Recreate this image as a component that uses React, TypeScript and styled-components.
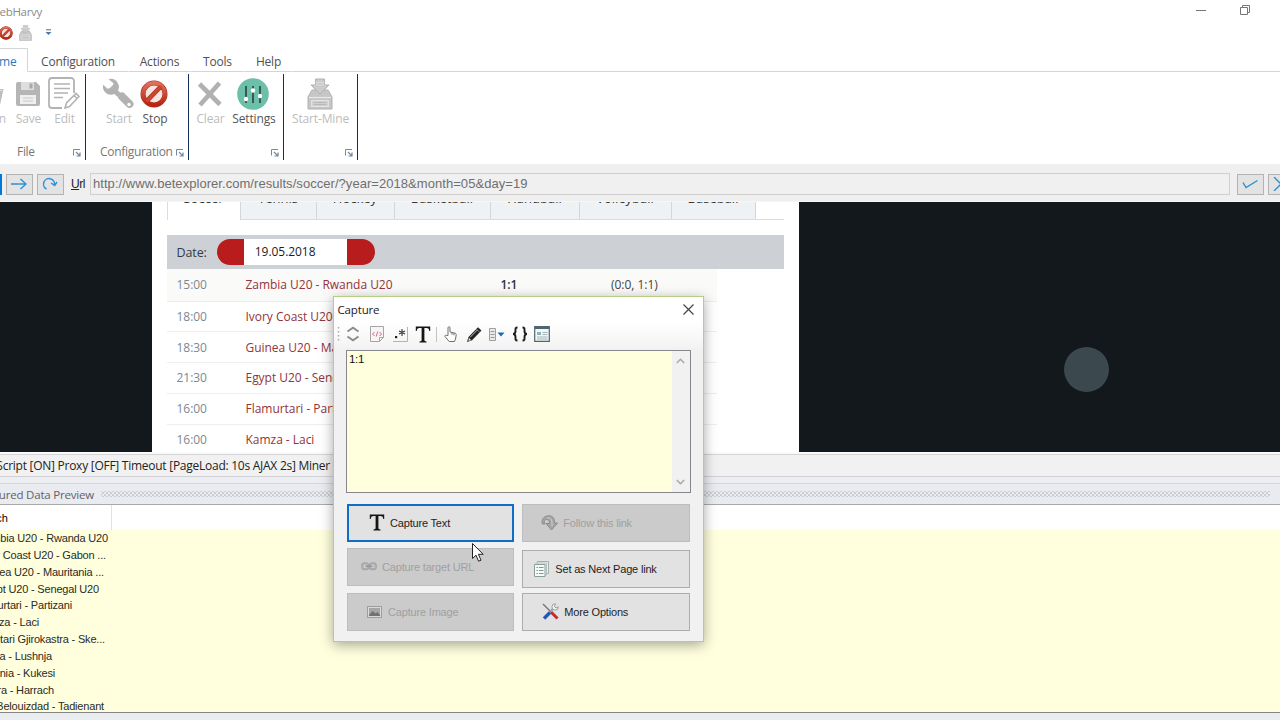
import React from "react";
import styled, { createGlobalStyle } from "styled-components";

const UI = `"Open Sans", "Noto Sans", sans-serif`;
const SANS = `"Liberation Sans", Arial, sans-serif`;

const Global = createGlobalStyle`
  * { box-sizing: border-box; }
  body { margin: 0; background: #fff; font-family: ${UI}; font-size: 12px; }
  svg { display: block; flex: none; }
`;

const Window = styled.div`
  position: relative;
  width: 1280px;
  height: 720px;
  overflow: hidden;
  display: flex;
  flex-direction: column;
  background: #fff;
`;

/* Title bar and quick access */
const TitleBar = styled.header`
  flex: none;
  height: 24px;
  display: flex;
  justify-content: space-between;
`;
const Title = styled.div`
  width: 42px;
  display: flex;
  justify-content: flex-end;
  font-size: 11.5px;
  letter-spacing: -0.3px;
  line-height: 24px;
  color: #8b8b8b;
  white-space: nowrap;
`;
const WindowControls = styled.div`
  display: flex;
  gap: 33px;
  padding: 4px 29px 0 0;
`;
const QuickAccess = styled.div`
  flex: none;
  height: 24px;
  display: flex;
  align-items: center;
  padding-bottom: 6px;
`;
const QuickItem = styled.div<{ $gap: number; $lift?: boolean }>`
  margin-left: ${(p) => p.$gap}px;
  padding-bottom: ${(p) => (p.$lift ? 2 : 0)}px;
`;

/* Ribbon tabs */
const Tabs = styled.nav`
  flex: none;
  height: 24px;
  display: flex;
`;
const Tab = styled.div<{ $w: number; $active?: boolean }>`
  width: ${(p) => p.$w}px;
  display: flex;
  justify-content: ${(p) => (p.$active ? "flex-end" : "center")};
  padding-right: ${(p) => (p.$active ? 10.5 : 0)}px;
  border-bottom: 1px solid ${(p) => (p.$active ? "#fff" : "#d5d5d5")};
  border-top: 1px solid ${(p) => (p.$active ? "#d5d5d5" : "transparent")};
  border-right: 1px solid ${(p) => (p.$active ? "#d5d5d5" : "transparent")};
  line-height: 25px;
  letter-spacing: -0.2px;
  color: ${(p) => (p.$active ? "#2a79c0" : "#505050")};
`;
const TabFill = styled.div`
  flex: 1;
  border-bottom: 1px solid #d5d5d5;
`;

/* Ribbon */
const Ribbon = styled.section`
  flex: none;
  height: 92px;
  display: flex;
  padding: 2px 0 4px;
`;
const Group = styled.div<{ $w: number }>`
  width: ${(p) => p.$w}px;
  flex: none;
  display: flex;
  flex-direction: column;
  justify-content: space-between;
  border-right: 1px solid #12305c;
  padding-top: 3px;
`;
const Tools = styled.div<{ $indent: number }>`
  display: flex;
  padding-left: ${(p) => p.$indent}px;
`;
const Tool = styled.div<{ $w: number; $off?: boolean; $end?: boolean }>`
  width: ${(p) => p.$w}px;
  display: flex;
  flex-direction: column;
  align-items: ${(p) => (p.$end ? "flex-end" : "center")};
  color: ${(p) => (p.$off ? "#bcbcbc" : "#555")};
  white-space: nowrap;
  letter-spacing: -0.15px;
  line-height: 16px;
`;
const ToolIcon = styled.div`
  height: 34px;
  padding: 0 2px 1px 0;
  display: flex;
  align-items: center;
`;
const GroupFoot = styled.div<{ $pad: number }>`
  display: flex;
  justify-content: space-between;
  align-items: center;
  padding: 0 4px 0 ${(p) => p.$pad}px;
  height: 16px;
  line-height: 16px;
  color: #777;
  letter-spacing: -0.3px;
`;

/* Address bar */
const AddressBar = styled.div`
  flex: none;
  height: 38px;
  display: flex;
  align-items: center;
  padding-top: 3px;
  background: #efefef;
  font-family: ${SANS};
  border-bottom: 1px solid #f6f6f6;
`;
const BackEdge = styled.div`
  width: 2px;
  height: 21px;
  background: #0078d7;
  margin-right: 4px;
`;
const SquareButton = styled.button`
  width: 27px;
  height: 21px;
  flex: none;
  padding: 0 1px 0 0;
  margin-right: 4px;
  display: flex;
  align-items: center;
  justify-content: center;
  background: #e3e3e3;
  border: 1px solid #b3b3b3;
`;
const LastButton = styled(SquareButton)`
  margin-right: -15px;
`;
const UrlLabel = styled.div`
  width: 22px;
  padding-left: 3px;
  font-size: 12px;
  letter-spacing: -0.5px;
  color: #222;
  &::first-letter { text-decoration: underline; }
`;
const UrlField = styled.div`
  flex: 1;
  height: 22px;
  margin-right: 7px;
  padding-left: 2px;
  border: 1px solid #cfcfcf;
  background: #f0f0f0;
  line-height: 20px;
  font-size: 13px;
  letter-spacing: 0.05px;
  color: #6f6f6f;
`;

/* Browser page */
const Browser = styled.main`
  flex: none;
  height: 250px;
  display: flex;
  background: #12181c;
  overflow: hidden;
`;
const Page = styled.div`
  width: 647px;
  flex: none;
  margin-left: 152px;
  padding-left: 15px;
  background: #fff;
`;
const SportTabs = styled.div`
  width: 617px;
  height: 18px;
  display: flex;
  border-bottom: 1px solid #d9dde1;
`;
const SportTab = styled.div<{ $w: number; $active?: boolean }>`
  width: ${(p) => p.$w}px;
  height: ${(p) => (p.$active ? 18 : 17)}px;
  overflow: hidden;
  background: ${(p) => (p.$active ? "#fff" : "#eff2f5")};
  border-right: 1px solid #d3d7db;
  border-left: ${(p) => (p.$active ? "1px solid #d9dde1" : "0")};
  text-align: center;
  font-size: 13px;
  line-height: 18px;
  color: #333;
  & > span { display: block; margin-top: -12px; margin-right: 1px; line-height: 16px; }
`;
const DateBar = styled.div`
  width: 617px;
  height: 34px;
  margin-top: 15px;
  padding-left: 9.5px;
  display: flex;
  align-items: center;
  background: #cdd1d5;
  color: #333c44;
  font-size: 12.5px;
  letter-spacing: -0.1px;
`;
const DatePicker = styled.div`
  width: 158px;
  height: 26px;
  margin-left: 10px;
  border-radius: 13px;
  border: 0 solid #b81c1c;
  border-width: 0 28px 0 27px;
  background: #fff;
  padding-left: 11px;
  line-height: 26px;
  font-size: 12px;
  letter-spacing: -0.05px;
  color: #1c1c1c;
`;
const Match = styled.div<{ $first?: boolean }>`
  width: 550px;
  height: ${(p) => (p.$first ? 32.6 : 30.75)}px;
  display: flex;
  align-items: center;
  padding: 0 0 ${(p) => (p.$first ? 1 : 0.4)}px 9.5px;
  border-bottom: 1px solid #eeeeee;
  background: ${(p) => (p.$first ? "#fafaf9" : "#fff")};
  font-size: 12px;
  letter-spacing: -0.03px;
  white-space: nowrap;
`;
const Time = styled.div`
  width: 69px;
  flex: none;
  color: #7b8891;
`;
const Teams = styled.div<{ $strong?: boolean }>`
  width: 255px;
  flex: none;
  color: #93333a;
  font-weight: ${(p) => (p.$strong ? 500 : 400)};
`;
const Score = styled.div`
  width: 110.5px;
  flex: none;
  font-weight: 600;
  color: #333;
`;
const Halves = styled.div`
  color: #444;
`;
const Spinner = styled.div`
  width: 45px;
  height: 45px;
  margin: 145px 0 0 265px;
  border-radius: 50%;
  background: #3b494f;
`;

/* Bottom panels */
const StatusBar = styled.div`
  flex: none;
  height: 24px;
  display: flex;
  border-top: 2px solid #fafafa;
  background: #f1f1f1;
  box-shadow: inset 0 1px #d4d4d4;
`;
const StatusText = styled.div`
  width: 330px;
  display: flex;
  justify-content: flex-end;
  line-height: 23px;
  font-size: 12px;
  letter-spacing: -0.26px;
  white-space: nowrap;
  color: #222;
`;
const Splitter = styled.div`
  flex: none;
  height: 7px;
  background: #eceef2;
  border-top: 1px solid #cfd1d6;
`;
const PreviewHead = styled.div`
  flex: none;
  height: 22px;
  display: flex;
  align-items: center;
  background: #e9ebf0;
  border-top: 1px solid #d4d6db;
  border-bottom: 1px solid #a9a9a7;
`;
const PreviewTitle = styled.div`
  width: 94px;
  display: flex;
  justify-content: flex-end;
  white-space: nowrap;
  font-size: 11.5px;
  letter-spacing: -0.2px;
  color: #5f6368;
`;
const Grip = styled.div`
  flex: 1;
  height: 6px;
  margin: 0 10px 0 7px;
  background-image: radial-gradient(circle, #cbced3 0.8px, transparent 1px),
    radial-gradient(circle, #cbced3 0.8px, transparent 1px);
  background-size: 4px 4px;
  background-position: 0 0, 2px 2px;
`;
const ColumnHead = styled.div`
  flex: none;
  height: 25px;
  display: flex;
  background: #fff;
  font-family: ${SANS};
  font-size: 11px;
  line-height: 26px;
`;
const ColumnCell = styled.div`
  width: 112px;
  border-right: 1px solid #e2e2e2;
  & > span { display: flex; justify-content: flex-end; width: 8px; }
`;
const Rows = styled.div`
  flex: none;
  height: 183px;
  background: #ffffde;
  border-bottom: 1px solid #858585;
  overflow: hidden;
  font-family: ${SANS};
  font-size: 11px;
  letter-spacing: -0.18px;
`;
const Row = styled.div<{ $end: number }>`
  width: ${(p) => p.$end}px;
  height: 16.85px;
  line-height: 17.4px;
  display: flex;
  justify-content: flex-end;
  white-space: nowrap;
  color: #2b2b22;
`;
const Footer = styled.div`
  flex: 1;
  background: #eaedf0;
`;

/* Capture dialog */
const Dialog = styled.div`
  position: absolute;
  left: 333px;
  top: 296px;
  width: 371px;
  height: 346px;
  border: 1px solid #b7ce82;
  background: #f1f1f1;
  box-shadow: 0 3px 12px rgba(0, 0, 0, 0.35);
`;
const DialogTitle = styled.div`
  height: 25px;
  display: flex;
  align-items: center;
  justify-content: space-between;
  padding: 0 9px 1px 3.5px;
  background: #fff;
  font-size: 11.5px;
  letter-spacing: -0.15px;
  color: #222;
`;
const DialogTools = styled.div`
  height: 26px;
  display: flex;
  align-items: center;
  padding: 0 0 2px 3px;
  background: linear-gradient(#fff, #f3f3f3);
`;
const DialogTool = styled.div<{ $w: number }>`
  width: ${(p) => p.$w}px;
  display: flex;
  justify-content: center;
`;
const TextArea = styled.div`
  width: 344.500px;
  height: 143px;
  margin: 2px 0 0 12px;
  border: 1px solid #86868c;
  background: #ffffde;
  display: flex;
  justify-content: space-between;
  font-family: ${SANS};
  font-size: 11.5px;
  letter-spacing: -0.3px;
  color: #111;
`;
const TextValue = styled.div`
  padding: 2px 0 0 2px;
`;
const Scroll = styled.div`
  width: 18px;
  display: flex;
  flex-direction: column;
  justify-content: space-between;
  align-items: center;
  padding: 7px 1px 7px 0;
  background: #f1f1f1;
`;
const Actions = styled.div`
  display: flex;
  gap: 8px;
  padding: 11px 0 0 13px;
`;
const ActionColumn = styled.div<{ $gapA: number; $gapB: number }>`
  display: flex;
  flex-direction: column;
  & > :nth-child(2) { margin-top: ${(p) => p.$gapA}px; }
  & > :nth-child(3) { margin-top: ${(p) => p.$gapB}px; }
`;
const Action = styled.button<{ $pad: number; $gap: number; $kind?: "off" | "focus" }>`
  width: 167.300px;
  height: 38px;
  padding: 0 0 1px ${(p) => p.$pad - (p.$kind === "focus" ? 1 : 0)}px;
  display: flex;
  align-items: center;
  gap: ${(p) => p.$gap}px;
  border: ${(p) =>
    p.$kind === "focus" ? "2px solid #0f6fc6" : p.$kind === "off" ? "1px solid #bdbdbd" : "1px solid #adadad"};
  background: ${(p) => (p.$kind === "off" ? "#cbcbcb" : "#e2e2e2")};
  color: ${(p) => (p.$kind === "off" ? "#a0a0a0" : "#1e1e1e")};
  font-family: ${SANS};
  font-size: 11px;
  letter-spacing: -0.18px;
  white-space: nowrap;
`;
const Pointer = styled.div`
  position: absolute;
  left: 471px;
  top: 542px;
`;

/* Icons */
const StopIcon = ({ size }: { size: number }) => (
  <svg width={size} height={size} viewBox="0 0 28 28">
    <defs>
      <linearGradient id="stop" x1="0" y1="0" x2="0" y2="1">
        <stop offset="0" stopColor="#e0705c" />
        <stop offset="1" stopColor="#b82410" />
      </linearGradient>
    </defs>
    <circle cx="14" cy="14" r="11" fill="#f6e4df" stroke="#a8301e" strokeWidth="5" />
    <circle cx="14" cy="14" r="11" fill="none" stroke="url(#stop)" strokeWidth="3.800" />
    <path d="M20.400 7 7.400 20.400" stroke="#a8301e" strokeWidth="4.600" />
    <path d="M21.200 6.200 6.600 21.200" stroke="#cc4530" strokeWidth="3.400" />
  </svg>
);
const MineIcon = ({ w, h }: { w: number; h: number }) => (
  <svg width={w} height={h} viewBox="0 0 26 32">
    <path d="M5 12h16l4 7v12H1V19z" fill="#c6c6c6" stroke="#b0b0b0" />
    <path d="M8.500 1h9v6h4.500l-9 9-9-9h4.500z" fill="#cbcbcb" stroke="#b0b0b0" />
    <path d="M8.500 4.500h9M8.500 7h9" stroke="#dcdcdc" />
    <path d="M2 19.500h22" stroke="#e8e8e8" strokeWidth="1.200" />
    <path d="M4.500 22.500h17v6h-17z" fill="#d2d2d2" stroke="#e2e2e2" />
    <path d="M6.500 24.500h13M6.500 26.500h13" stroke="#b8b8b8" />
  </svg>
);
const FolderIcon = () => (
  <svg width="8" height="28" viewBox="0 0 8 28">
    <path d="M0 2h3v7h4.500L4 25H0z" fill="#bdbdbd" />
    <path d="M0 10.500h6" stroke="#e6e6e6" />
  </svg>
);
const SaveIcon = () => (
  <svg width="24" height="26" viewBox="0 0 24 26">
    <path d="M2 1h18l4 4v18a2 2 0 0 1-2 2H2a2 2 0 0 1-2-2V3a2 2 0 0 1 2-2z" fill="#b5b5b5" />
    <path d="M5 1h13v8H5z" fill="#dedede" />
    <path d="M13.500 2.500h3v5h-3z" fill="#a9a9a9" />
    <path d="M4 14h16v9H4z" fill="#efefef" />
    <path d="M7 17h10M7 20h10" stroke="#c8c8c8" />
  </svg>
);
const EditIcon = () => (
  <svg width="32" height="33" viewBox="0 0 32 33" fill="none" stroke="#b3b3b3">
    <path d="M26 16V4a3 3 0 0 0-3-3H4a3 3 0 0 0-3 3v24a3 3 0 0 0 3 3h10" strokeWidth="1.800" />
    <path d="M6 7h16M6 11.500h16M6 16h14M6 20.500h9" strokeWidth="1.600" />
    <path d="m17 31 1.500-5L28 16.500l3 3L21.500 29.500z" strokeWidth="1.600" fill="#fff" />
    <path d="m26 18.500 3 3" strokeWidth="1.600" />
  </svg>
);
const WrenchIcon = () => (
  <svg width="32" height="32" viewBox="0 0 32 32">
    <path d="M9 9 17 17" stroke="#b2b2b2" strokeWidth="5" />
    <path d="M6.500 1.200A8 8 0 1 1 1.200 6.800L5.500 10.800l4.700-1.200 1.300-4.300z" fill="#b2b2b2" />
    <path d="m20 18.500 7.500 7.500" stroke="#b2b2b2" strokeWidth="8" strokeLinecap="round" />
    <circle cx="27" cy="26.500" r="1.700" fill="#fff" />
  </svg>
);
const ClearIcon = () => (
  <svg width="26" height="26" viewBox="0 0 26 26">
    <path d="M2.500 3 23 23.500M22.500 2 3 24" stroke="#b1b1b1" strokeWidth="4.600" />
  </svg>
);
const SettingsIcon = () => (
  <svg width="32" height="32" viewBox="0 0 32 32">
    <circle cx="16" cy="16" r="15.800" fill="#6cbfa8" />
    <path d="M9 8v17M16 8v17M23 8v17" stroke="#31504c" strokeWidth="1.800" />
    <circle cx="9" cy="21" r="2.200" fill="#fff" />
    <circle cx="16" cy="12.500" r="2.200" fill="#fff" />
    <circle cx="23" cy="18" r="2.200" fill="#fff" />
  </svg>
);
const Launcher = () => (
  <svg width="9" height="9" viewBox="0 0 9 9" fill="none" stroke="#7388a5">
    <path d="M1.500 7.500V1.500H8" />
    <path d="m4 4 3.500 3.500M8 4.500V8H4.500" strokeWidth="1.200" />
  </svg>
);
const UpDown = () => (
  <svg width="14" height="16" viewBox="0 0 14 16" fill="none" stroke="#8c8c8c" strokeWidth="2">
    <path d="M1.500 5.500 7 1.700l5.500 3.800M1.500 10.500 7 14.300l5.500-3.800" />
  </svg>
);
const CodePage = () => (
  <svg width="14" height="16" viewBox="0 0 14 16">
    <path d="M.5.5h13v11l-4 4h-9z" fill="#f6f4f5" stroke="#a5a5a5" />
    <path d="M9.500 15.500v-4h4" fill="none" stroke="#a5a5a5" />
    <path d="M4.500 6 2.500 8l2 2M9.500 6l2 2-2 2M7.700 5.500l-1.400 5" fill="none" stroke="#d86a83" />
  </svg>
);
const RegexIcon = () => (
  <svg width="15" height="16" viewBox="0 0 15 16">
    <path d="M14.500 1v14.500H0" fill="none" stroke="#b3b3b3" />
    <path d="M2 10h2.200v2.200H2z" fill="#222" />
    <path d="M9 3v7M6 5l6 3M12 5 6 8" stroke="#333" strokeWidth="1.100" />
  </svg>
);
const SerifT = () => (
  <svg width="16" height="17" viewBox="0 0 16 17">
    <path d="M.8.500h14.400v4.500h-.9c-.3-2.400-1.200-3-2.800-3H9.400v11.800c0 1.200.5 1.600 2.100 1.700v1H4.500v-1c1.600-.1 2.100-.5 2.100-1.700V2H4.500C2.900 2 2 2.600 1.700 5H.8z" fill="#151515" />
  </svg>
);
const HandIcon = () => (
  <svg width="13" height="16" viewBox="0 0 13 16" fill="#fff" stroke="#6e6e6e">
    <path d="M4 9.500V1.800a1 1 0 0 1 2 0V6l5 1.200c1 .3 1.300.8 1.200 1.800l-.7 4-1 2.500H5.200L1 10.600c-.6-.9.500-1.700 1.300-1.200z" />
    <path d="M8 6.500v2.300M10 7v2.300" />
  </svg>
);
const PencilIcon = () => (
  <svg width="17" height="17" viewBox="0 0 17 17">
    <path d="m1 16 1.500-5L12 1.200l3.500 3.300L6 14.300z" fill="#222" />
    <path d="m4.200 11.200 7.300-7.400" stroke="#bbb" strokeWidth="1" />
    <path d="m10.300 3 3.500 3.400" stroke="#999" strokeWidth=".8" />
    <path d="m2.700 11.800 2.500 2.300-2.700.9z" fill="#ddd" />
  </svg>
);
const ListDrop = () => (
  <svg width="16" height="13" viewBox="0 0 16 13">
    <path d="M.5.5h6v12h-6z" fill="#e9e9e9" stroke="#a0a0a0" />
    <path d="M1.500 3.500h4M1.500 6.500h4M1.500 9.500h4" stroke="#9a9a9a" />
    <path d="M8.500 4.500h7L12 8.500z" fill="#1b68ad" />
  </svg>
);
const BracesIcon = () => (
  <svg width="16" height="16" viewBox="0 0 16 16" fill="none" stroke="#1c1c1c" strokeWidth="1.900">
    <path d="M5.500 1.500C3 1.500 3.500 3 3.500 5S3 8 1 8c2 0 2.500 1 2.500 3s-.5 3.500 2 3.500M10.500 1.500c2.500 0 2 1.500 2 3.500s.5 3 2.500 3c-2 0-2.500 1-2.500 3s.5 3.500-2 3.500" />
  </svg>
);
const FormIcon = () => (
  <svg width="16" height="16" viewBox="0 0 16 16">
    <path d="M.7.700h14.600v14.600H.7z" fill="#f2f6f6" stroke="#50666e" strokeWidth="1.200" />
    <path d="M1 2h14" stroke="#50666e" strokeWidth="2" />
    <path d="M3 6h4v3H3z" fill="#8fb4b8" />
    <path d="M8.500 6.500h5M8.500 8.500h5M3 11h10.500M3 13h10.500" stroke="#a4b6ba" />
  </svg>
);
const FollowIcon = () => (
  <svg width="17" height="16" viewBox="0 0 17 16">
    <path d="M1.500 9C-.5 4 4 .7 8 .8c4.500.2 5.800 3.700 5.500 7.200h3L10.500 15 5 8.500h3.500C8.800 6 7.500 4.500 5.500 4.500 3.500 4.600 2.500 6.500 4 9z" fill="#a6a6a6" stroke="#8c8c8c" />
    <path d="M6 3c3-.6 5 1.500 5 5v3" stroke="#cfcfcf" fill="none" />
  </svg>
);
const ChainIcon = () => (
  <svg width="16" height="9" viewBox="0 0 16 9" fill="none">
    <g stroke="#9a9a9a" strokeWidth="2">
      <rect x="1.200" y="1.300" width="6" height="6" rx="2.600" />
      <rect x="8.800" y="1.300" width="6" height="6" rx="2.600" />
    </g>
    <g stroke="#c4c4c4" strokeWidth=".7">
      <rect x="1.200" y="1.300" width="6" height="6" rx="2.600" />
      <rect x="8.800" y="1.300" width="6" height="6" rx="2.600" />
    </g>
    <path d="M4.500 4.300h7" stroke="#979797" strokeWidth="1.400" />
  </svg>
);
const ImageIcon = () => (
  <svg width="15" height="12" viewBox="0 0 15 12">
    <path d="M.5.5h14v11H.5z" fill="#dadada" stroke="#9c9c9c" />
    <path d="M2 2h11v8H2z" fill="#a6a6a6" />
    <path d="m2 9 3.500-4 3 2.500L10.500 6 13 9v1H2z" fill="#727272" />
  </svg>
);
const PagesIcon = () => (
  <svg width="15" height="16" viewBox="0 0 15 16">
    <path d="M3.500.5h11v12h-11z" fill="#e9f0ee" stroke="#a3b1ae" />
    <path d="M2 2h10.500v12H2z" fill="#e9f0ee" stroke="#b3c0bd" />
    <path d="M.5 3.500h10.500v12H.5z" fill="#f5faf8" stroke="#8c9e9a" />
    <path d="M2.500 6.500H4M5 6.500h4.500M2.500 9.500H4M5 9.500h4.500M2.500 12.500H4M5 12.500h4.500" stroke="#7f9791" />
  </svg>
);
const OptionsIcon = () => (
  <svg width="17" height="17" viewBox="0 0 17 17">
    <path d="m1 1 8 8" stroke="#777" strokeWidth="1.400" />
    <path d="m9 9 6.500 6.500" stroke="#c02d2d" strokeWidth="3" />
    <path d="m8.500 8.500 4.500-5" stroke="#9aa4ae" strokeWidth="2.200" />
    <path d="M13.500.8a3.200 3.200 0 1 0 2.800 3L14 5l-1.500-1.500z" fill="#eef1f4" stroke="#8e979f" strokeWidth=".9" />
    <path d="m8 9.500-6 6" stroke="#2459b8" strokeWidth="3.400" />
  </svg>
);

const matches: [string, string, boolean?][] = [
  ["18:00", "Ivory Coast U20 - Gabon U20", true],
  ["18:30", "Guinea U20 - Mauritania U20", true],
  ["21:30", "Egypt U20 - Senegal U20"],
  ["16:00", "Flamurtari - Partizani"],
  ["16:00", "Kamza - Laci"],
];
const sports: [string, number][] = [
  ["Soccer", 74], ["Tennis", 76], ["Hockey", 78], ["Basketball", 96],
  ["Handball", 89], ["Volleyball", 92], ["Baseball", 84],
];
const captured: [string, number][] = [
  ["Zambia U20 - Rwanda U20", 108], ["Ivory Coast U20 - Gabon ...", 106],
  ["Guinea U20 - Mauritania ...", 104], ["Egypt U20 - Senegal U20", 99],
  ["Flamurtari - Partizani", 72], ["Kamza - Laci", 39],
  ["Luftetari Gjirokastra - Ske...", 105], ["Teuta - Lushnja", 52],
  ["Tirania - Kukesi", 55], ["El Harra - Harrach", 54],
  ["CR Belouizdad - Tadienant", 104],
];

export default function App() {
  return (
    <Window>
      <Global />
      <TitleBar>
        <Title>WebHarvy</Title>
        <WindowControls>
          <svg width="11" height="12" viewBox="0 0 11 12"><path d="M0 6.500h10" stroke="#777" /></svg>
          <svg width="11" height="12" viewBox="0 0 11 12" fill="none" stroke="#777">
            <path d="M.5 3.500h7v7h-7zM2.500 3V1.500h7v7H8" />
          </svg>
        </WindowControls>
      </TitleBar>
      <QuickAccess>
        <QuickItem $gap={-1}><StopIcon size={14} /></QuickItem>
        <QuickItem $gap={6}><MineIcon w={13} h={16} /></QuickItem>
        <QuickItem $gap={13} $lift>
          <svg width="7" height="7" viewBox="0 0 7 7"><path d="M1 .8h5" stroke="#667" /><path d="M.5 3h6L3.500 6z" fill="#4f78a8" /></svg>
        </QuickItem>
      </QuickAccess>
      <Tabs>
        <Tab $w={28} $active>Home</Tab>
        <Tab $w={101}>Configuration</Tab>
        <Tab $w={62}>Actions</Tab>
        <Tab $w={54}>Tools</Tab>
        <Tab $w={48}>Help</Tab>
        <TabFill />
      </Tabs>
      <Ribbon>
        <Group $w={86}>
          <Tools $indent={0}>
            <Tool $w={6} $off $end><ToolIcon><FolderIcon /></ToolIcon>Open</Tool>
            <Tool $w={45} $off><ToolIcon><SaveIcon /></ToolIcon>Save</Tool>
            <Tool $w={27} $off><ToolIcon><EditIcon /></ToolIcon>Edit</Tool>
          </Tools>
          <GroupFoot $pad={17}>File<Launcher /></GroupFoot>
        </Group>
        <Group $w={103}>
          <Tools $indent={15}>
            <Tool $w={36} $off><ToolIcon><WrenchIcon /></ToolIcon>Start</Tool>
            <Tool $w={36}><ToolIcon><StopIcon size={28} /></ToolIcon>Stop</Tool>
          </Tools>
          <GroupFoot $pad={14}>Configuration<Launcher /></GroupFoot>
        </Group>
        <Group $w={95}>
          <Tools $indent={3}>
            <Tool $w={37} $off><ToolIcon><ClearIcon /></ToolIcon>Clear</Tool>
            <Tool $w={50}><ToolIcon><SettingsIcon /></ToolIcon>Settings</Tool>
          </Tools>
          <GroupFoot $pad={0}><span /><Launcher /></GroupFoot>
        </Group>
        <Group $w={74}>
          <Tools $indent={0}>
            <Tool $w={73} $off><ToolIcon><MineIcon w={26} h={32} /></ToolIcon>Start-Mine</Tool>
          </Tools>
          <GroupFoot $pad={0}><span /><Launcher /></GroupFoot>
        </Group>
      </Ribbon>
      <AddressBar>
        <BackEdge />
        <SquareButton>
          <svg width="16" height="12" viewBox="0 0 16 12" fill="none" stroke="#2f93d6" strokeWidth="1.500"><path d="M0 6h15M9.500 1l5.500 5-5.500 5" /></svg>
        </SquareButton>
        <SquareButton>
          <svg width="16" height="14" viewBox="0 0 16 14" fill="none" stroke="#2f93d6" strokeWidth="1.500"><path d="M4.500 12A5.500 5.500 0 1 1 12.500 7.500M9 6l3.700 2.500L15 5" /></svg>
        </SquareButton>
        <UrlLabel>Url</UrlLabel>
        <UrlField>http://www.betexplorer.com/results/soccer/?year=2018&amp;month=05&amp;day=19</UrlField>
        <SquareButton>
          <svg width="16" height="10" viewBox="0 0 16 10" fill="none" stroke="#2f8fca" strokeWidth="1.400"><path d="M1 3.500 4 8.500 15.500 1.500" /></svg>
        </SquareButton>
        <LastButton>
          <svg width="16" height="14" viewBox="0 0 16 14" fill="none" stroke="#2f8fca" strokeWidth="1.400"><path d="m1 0 14 14M15 0 1 14" /></svg>
        </LastButton>
      </AddressBar>
      <Browser>
        <Page>
          <SportTabs>
            {sports.map(([name, w], i) => (
              <SportTab key={name} $w={w} $active={i === 0}><span>{name}</span></SportTab>
            ))}
          </SportTabs>
          <DateBar>Date:<DatePicker>19.05.2018</DatePicker></DateBar>
          <Match $first>
            <Time>15:00</Time><Teams>Zambia U20 - Rwanda U20</Teams><Score>1:1</Score><Halves>(0:0, 1:1)</Halves>
          </Match>
          {matches.map(([time, teams, strong]) => (
            <Match key={teams}><Time>{time}</Time><Teams $strong={strong}>{teams}</Teams></Match>
          ))}
        </Page>
        <Spinner />
      </Browser>
      <StatusBar><StatusText>Script [ON] Proxy [OFF] Timeout [PageLoad: 10s AJAX 2s] Miner</StatusText></StatusBar>
      <Splitter />
      <PreviewHead><PreviewTitle>Captured Data Preview</PreviewTitle><Grip /></PreviewHead>
      <ColumnHead><ColumnCell><span>Match</span></ColumnCell></ColumnHead>
      <Rows>
        {captured.map(([name, end]) => <Row key={name} $end={end}>{name}</Row>)}
      </Rows>
      <Footer />

      <Dialog>
        <DialogTitle>
          Capture
          <svg width="11" height="11" viewBox="0 0 11 11" stroke="#444" strokeWidth="1.200"><path d="m.5.5 10 10M10.500.5l-10 10" /></svg>
        </DialogTitle>
        <DialogTools>
          <svg width="5" height="14" viewBox="0 0 5 14"><path d="M1.500 0v14" stroke="#aaa" strokeWidth="1.500" strokeDasharray="1.500 2.500" /></svg>
          <DialogTool $w={22}><UpDown /></DialogTool>
          <DialogTool $w={26}><CodePage /></DialogTool>
          <DialogTool $w={21}><RegexIcon /></DialogTool>
          <DialogTool $w={24}><SerifT /></DialogTool>
          <svg width="3" height="15" viewBox="0 0 3 15"><path d="M1.500 0v15" stroke="#c4c4c4" /></svg>
          <DialogTool $w={25}><HandIcon /></DialogTool>
          <DialogTool $w={22}><PencilIcon /></DialogTool>
          <DialogTool $w={24}><ListDrop /></DialogTool>
          <DialogTool $w={21}><BracesIcon /></DialogTool>
          <DialogTool $w={24}><FormIcon /></DialogTool>
        </DialogTools>
        <TextArea>
          <TextValue>1:1</TextValue>
          <Scroll>
            <svg width="9" height="6" viewBox="0 0 9 6" fill="none" stroke="#aaa" strokeWidth="1.600"><path d="M.8 5 4.500 1.300 8.200 5" /></svg>
            <svg width="9" height="6" viewBox="0 0 9 6" fill="none" stroke="#aaa" strokeWidth="1.600"><path d="M.8 1 4.500 4.700 8.200 1" /></svg>
          </Scroll>
        </TextArea>
        <Actions>
          <ActionColumn $gapA={6} $gapB={7}>
            <Action $pad={21} $gap={5} $kind="focus"><SerifT />Capture Text</Action>
            <Action $pad={13} $gap={5} $kind="off"><ChainIcon />Capture target URL</Action>
            <Action $pad={19} $gap={6} $kind="off"><ImageIcon />Capture Image</Action>
          </ActionColumn>
          <ActionColumn $gapA={8} $gapB={5}>
            <Action $pad={18} $gap={5} $kind="off"><FollowIcon />Follow this link</Action>
            <Action $pad={11} $gap={6}><PagesIcon />Set as Next Page link</Action>
            <Action $pad={19} $gap={5}><OptionsIcon />More Options</Action>
          </ActionColumn>
        </Actions>
      </Dialog>
      <Pointer>
        <svg width="13" height="21" viewBox="0 0 13 21"><path d="M1.500 1.500v15l3.500-3.300 2.600 6 2.400-1-2.600-5.900h4.800z" fill="#fff" stroke="#222" /></svg>
      </Pointer>
    </Window>
  );
}
